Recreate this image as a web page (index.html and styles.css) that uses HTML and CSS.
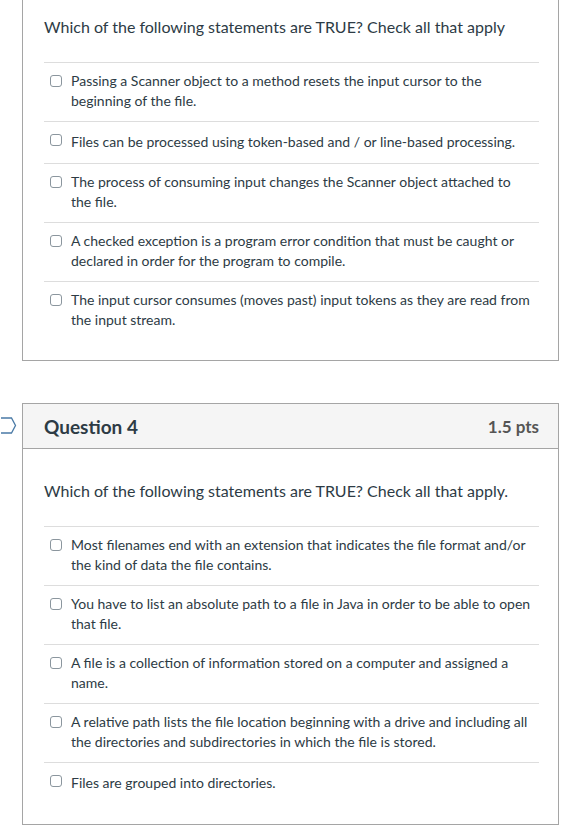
FILE: index.html
```html
<!DOCTYPE html>
<html lang="en">
<head>
    <meta charset="UTF-8">
    <meta name="viewport" content="width=device-width, initial-scale=1.0">
    <title>Quiz</title>
    <link rel="stylesheet" href="styles.css">
</head>
<body>
    <div class="quiz">
        <!-- Question 3, header scrolled out of view -->
        <div class="question question--cut">
            <div class="question-body">
                <div class="question-text">Which of the following statements are TRUE? Check all that apply</div>
                <div class="answers">
                    <label class="answer"><span class="checkbox"></span><span class="answer-text">Passing a Scanner object to a method resets the input cursor to the beginning of the file.</span></label>
                    <label class="answer"><span class="checkbox"></span><span class="answer-text">Files can be processed using token-based and / or line-based processing.</span></label>
                    <label class="answer"><span class="checkbox"></span><span class="answer-text">The process of consuming input changes the Scanner object attached to the file.</span></label>
                    <label class="answer"><span class="checkbox"></span><span class="answer-text">A checked exception is a program error condition that must be caught or declared in order for the program to compile.</span></label>
                    <label class="answer"><span class="checkbox"></span><span class="answer-text">The input cursor consumes (moves past) input tokens as they are read from the input stream.</span></label>
                </div>
            </div>
        </div>

        <div class="question">
            <svg class="flag" width="16" height="18" viewBox="0 0 16 18">
                <path d="M-4 1 H10.5 L14.5 8.5 L10.5 16 H-4" fill="none" stroke="#4a7aa6" stroke-width="1.3"/>
            </svg>
            <div class="question-header">
                <span class="question-name">Question 4</span>
                <span class="question-points">1.5 pts</span>
            </div>
            <div class="question-body">
                <div class="question-text">Which of the following statements are TRUE? Check all that apply.</div>
                <div class="answers">
                    <label class="answer"><span class="checkbox"></span><span class="answer-text">Most filenames end with an extension that indicates the file format and/or the kind of data the file contains.</span></label>
                    <label class="answer"><span class="checkbox"></span><span class="answer-text">You have to list an absolute path to a file in Java in order to be able to open that file.</span></label>
                    <label class="answer"><span class="checkbox"></span><span class="answer-text">A file is a collection of information stored on a computer and assigned a name.</span></label>
                    <label class="answer"><span class="checkbox"></span><span class="answer-text">A relative path lists the file location beginning with a drive and including all the directories and subdirectories in which the file is stored.</span></label>
                    <label class="answer"><span class="checkbox"></span><span class="answer-text">Files are grouped into directories.</span></label>
                </div>
            </div>
        </div>
    </div>
</body>
</html>
```

FILE: styles.css
```css
* {
    margin: 0;
    padding: 0;
    box-sizing: border-box;
}

body {
    font-family: Lato, "Open Sans", sans-serif;
    color: #2d3b45;
    background: #fff;
}

.quiz {
    padding: 0 3px 0 22px;
}

.question {
    position: relative;
    border: 1px solid #a5a5a5;
    margin-bottom: 42px;
}

.question--cut {
    border-top: 0;
}

.flag {
    position: absolute;
    left: -22px;
    top: 13px;
}

.question-header {
    display: flex;
    justify-content: space-between;
    align-items: center;
    height: 45px;
    padding: 0 19px 0 21px;
    background: #f5f5f5;
    border-bottom: 1px solid #a5a5a5;
}

.question-name {
    font-size: 19px;
    font-weight: 700;
}

.question-points {
    font-size: 17px;
    font-weight: 700;
    color: #555;
}

.question-body {
    padding: 31px 19px 20px 21px;
}

.question--cut .question-body {
    padding-top: 16px;
}

.question-text {
    font-size: 16px;
    line-height: 22px;
    margin-bottom: 24px;
}

.answer {
    display: flex;
    align-items: flex-start;
    gap: 9px;
    min-height: 42px;
    padding: 8px 6px 10px 6px;
    border-top: 1px solid #ddd;
    font-size: 14px;
    line-height: 20px;
}

.answer-text {
    align-self: center;
}

.checkbox {
    flex: none;
    width: 12px;
    height: 12px;
    margin-top: 4px;
    border: 1px solid #8b969e;
    border-radius: 3px;
    background: #fff;
}
```
